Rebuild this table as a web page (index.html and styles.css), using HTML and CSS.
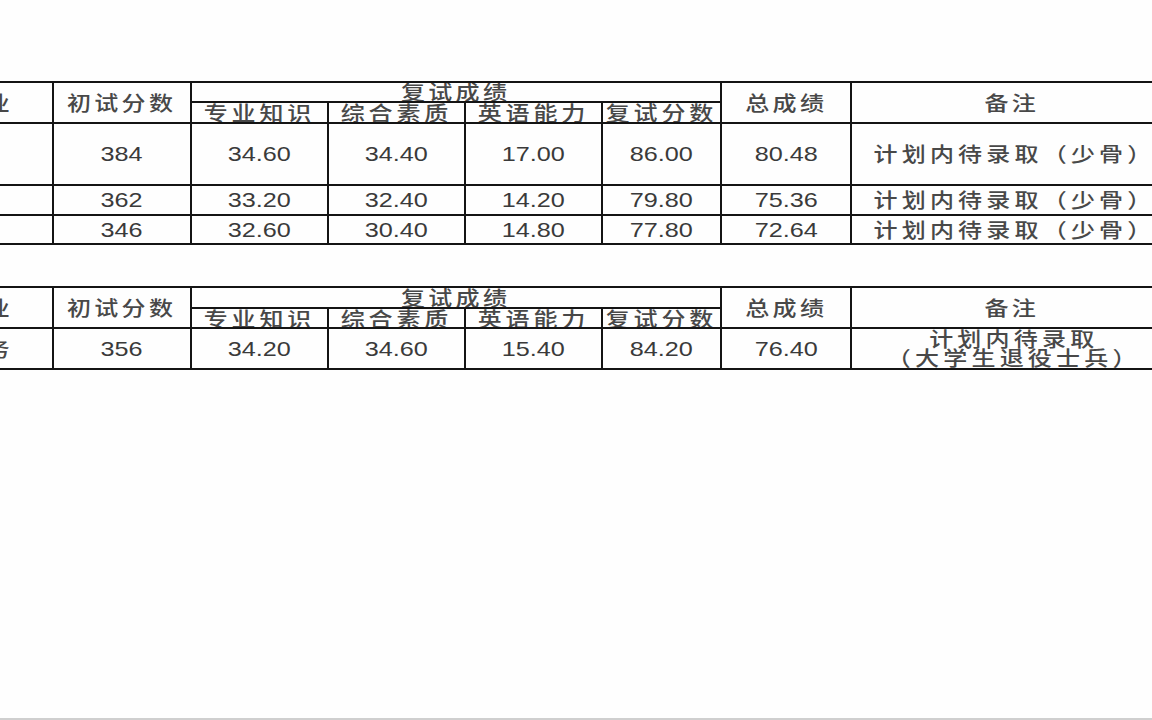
FILE: index.html
```html
<!DOCTYPE html>
<html lang="zh-CN">
<head>
<meta charset="utf-8">
<title>复试成绩</title>
<link rel="stylesheet" href="styles.css">
</head>
<body>
<div class="page">
  <div class="sheet">
    <div class="grid t1">
      <div class="cell left rspan"><span class="t">专业</span></div>
      <div class="cell rspan"><span class="t">初试分数</span></div>
      <div class="cell cspan top"><span class="t">复试成绩</span></div>
      <div class="cell rspan"><span class="t">总成绩</span></div>
      <div class="cell rspan"><span class="t">备注</span></div>
      <div class="cell sub"><span class="t">专业知识</span></div>
      <div class="cell sub"><span class="t">综合素质</span></div>
      <div class="cell sub"><span class="t">英语能力</span></div>
      <div class="cell sub"><span class="t">复试分数</span></div>

      <div class="cell left"></div>
      <div class="cell num"><span class="t">384</span></div>
      <div class="cell num"><span class="t">34.60</span></div>
      <div class="cell num"><span class="t">34.40</span></div>
      <div class="cell num"><span class="t">17.00</span></div>
      <div class="cell num"><span class="t">86.00</span></div>
      <div class="cell num"><span class="t">80.48</span></div>
      <div class="cell note"><span class="t">计划内待录取（少骨）</span></div>

      <div class="cell left"></div>
      <div class="cell num"><span class="t">362</span></div>
      <div class="cell num"><span class="t">33.20</span></div>
      <div class="cell num"><span class="t">32.40</span></div>
      <div class="cell num"><span class="t">14.20</span></div>
      <div class="cell num"><span class="t">79.80</span></div>
      <div class="cell num"><span class="t">75.36</span></div>
      <div class="cell note"><span class="t">计划内待录取（少骨）</span></div>

      <div class="cell left"></div>
      <div class="cell num"><span class="t">346</span></div>
      <div class="cell num"><span class="t">32.60</span></div>
      <div class="cell num"><span class="t">30.40</span></div>
      <div class="cell num"><span class="t">14.80</span></div>
      <div class="cell num"><span class="t">77.80</span></div>
      <div class="cell num"><span class="t">72.64</span></div>
      <div class="cell note"><span class="t">计划内待录取（少骨）</span></div>
    </div>

    <div class="grid t2">
      <div class="cell left rspan"><span class="t">专业</span></div>
      <div class="cell rspan"><span class="t">初试分数</span></div>
      <div class="cell cspan top"><span class="t">复试成绩</span></div>
      <div class="cell rspan"><span class="t">总成绩</span></div>
      <div class="cell rspan"><span class="t">备注</span></div>
      <div class="cell sub"><span class="t">专业知识</span></div>
      <div class="cell sub"><span class="t">综合素质</span></div>
      <div class="cell sub"><span class="t">英语能力</span></div>
      <div class="cell sub"><span class="t">复试分数</span></div>

      <div class="cell left"><span class="t">财务</span></div>
      <div class="cell num"><span class="t">356</span></div>
      <div class="cell num"><span class="t">34.20</span></div>
      <div class="cell num"><span class="t">34.60</span></div>
      <div class="cell num"><span class="t">15.40</span></div>
      <div class="cell num"><span class="t">84.20</span></div>
      <div class="cell num"><span class="t">76.40</span></div>
      <div class="cell note two"><span class="t">计划内待录取<br>（大学生退役士兵）</span></div>
    </div>
  </div>
  <div class="footer-line"></div>
</div>
</body>
</html>
```

FILE: styles.css
```css
html, body {
  margin: 0;
  padding: 0;
  overflow: hidden;
  background: #fefefe;
}

.page {
  width: 1152px;
  height: 720px;
  display: flex;
  flex-direction: column;
  overflow: hidden;
}

.sheet {
  flex: 1;
  padding-top: 81px;
  overflow: hidden;
}

.grid {
  display: grid;
  grid-template-columns: 150px 136px 135px 135px 135px 117px 128px 320px;
  gap: 2px;
  padding: 2px;
  background: #141414;
  width: max-content;
  margin-left: -100px;
  font-family: "Noto Sans CJK SC", "Liberation Sans", sans-serif;
  font-size: 20px;
  font-weight: 500;
  color: #484848;
}

.t1 {
  grid-template-rows: 18px 19px 60px 28px 27px;
}

.t2 {
  margin-top: 41px;
  grid-template-rows: 19px 18px 39px;
}

.cell {
  background: #fefefe;
  display: flex;
  align-items: center;
  justify-content: center;
  overflow: hidden;
  line-height: 20px;
  white-space: nowrap;
}

.t {
  display: inline-block;
  transform: scaleX(1.2);
  letter-spacing: 2.8px;
}

.rspan {
  grid-row: span 2;
}

.cspan {
  grid-column: span 4;
}

.top {
  line-height: 18px;
}

.sub {
  align-items: flex-start;
  padding-top: 0;
}

.sub .t {
  letter-spacing: 3.2px;
}

.left {
  justify-content: flex-end;
  padding-right: 43px;
}

.num {
  font-family: "Liberation Sans", Arial, sans-serif;
  font-size: 21px;
  font-weight: 400;
  color: #3a3a3a;
}

.num .t {
  letter-spacing: 0;
}

.note .t {
  letter-spacing: 3.5px;
  margin-left: 4px;
}

.two {
  align-items: flex-start;
  text-align: center;
  line-height: 19px;
}

.footer-line {
  height: 2px;
  background: #cfcfcf;
  flex-shrink: 0;
}
```
